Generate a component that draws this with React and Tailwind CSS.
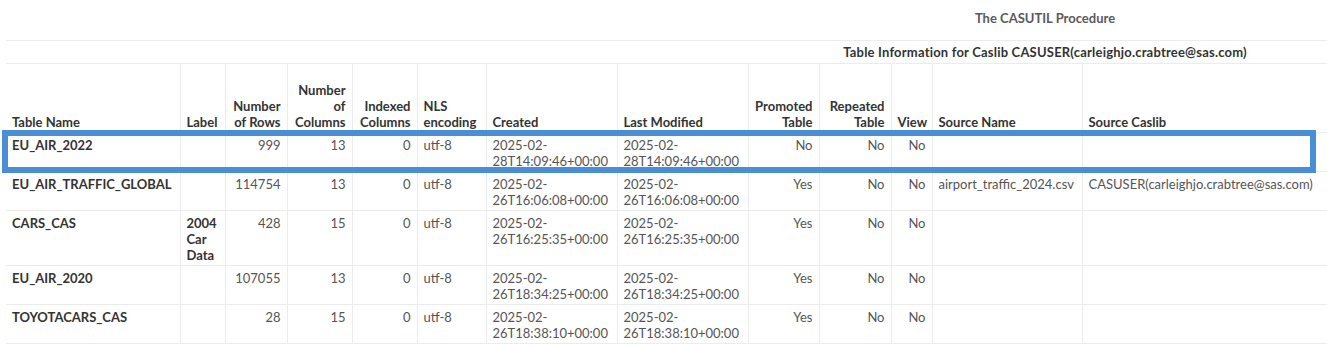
import React from 'react';

const cols = [
  { key: 'name', label: ['Table Name'], w: 174, align: 'left' },
  { key: 'label', label: ['Label'], w: 45, align: 'left' },
  { key: 'rows', label: ['Number', 'of Rows'], w: 62, align: 'right' },
  { key: 'cols', label: ['Number', 'of', 'Columns'], w: 65, align: 'right' },
  { key: 'idx', label: ['Indexed', 'Columns'], w: 65, align: 'right' },
  { key: 'nls', label: ['NLS', 'encoding'], w: 69, align: 'left' },
  { key: 'created', label: ['Created'], w: 131, align: 'left' },
  { key: 'modified', label: ['Last Modified'], w: 131, align: 'left' },
  { key: 'promoted', label: ['Promoted', 'Table'], w: 71, align: 'right' },
  { key: 'repeated', label: ['Repeated', 'Table'], w: 72, align: 'right' },
  { key: 'view', label: ['View'], w: 41, align: 'right' },
  { key: 'srcName', label: ['Source Name'], w: 150, align: 'left' },
  { key: 'srcCaslib', label: ['Source Caslib'], w: 1002, align: 'left' },
];

const tablas = [
  { name: 'EU_AIR_2022', label: '', rows: '999', cols: '13', idx: '0', nls: 'utf-8', created: '2025-02-28T14:09:46+00:00', modified: '2025-02-28T14:09:46+00:00', promoted: 'No', repeated: 'No', view: 'No', srcName: '', srcCaslib: '' },
  { name: 'EU_AIR_TRAFFIC_GLOBAL', label: '', rows: '114754', cols: '13', idx: '0', nls: 'utf-8', created: '2025-02-26T16:06:08+00:00', modified: '2025-02-26T16:06:08+00:00', promoted: 'Yes', repeated: 'No', view: 'No', srcName: 'airport_traffic_2024.csv', srcCaslib: 'CASUSER(carleighjo.crabtree@sas.com)' },
  { name: 'CARS_CAS', label: '2004 Car Data', rows: '428', cols: '15', idx: '0', nls: 'utf-8', created: '2025-02-26T16:25:35+00:00', modified: '2025-02-26T16:25:35+00:00', promoted: 'Yes', repeated: 'No', view: 'No', srcName: '', srcCaslib: '' },
  { name: 'EU_AIR_2020', label: '', rows: '107055', cols: '13', idx: '0', nls: 'utf-8', created: '2025-02-26T18:34:25+00:00', modified: '2025-02-26T18:34:25+00:00', promoted: 'Yes', repeated: 'No', view: 'No', srcName: '', srcCaslib: '' },
  { name: 'TOYOTACARS_CAS', label: '', rows: '28', cols: '15', idx: '0', nls: 'utf-8', created: '2025-02-26T18:38:10+00:00', modified: '2025-02-26T18:38:10+00:00', promoted: 'Yes', repeated: 'No', view: 'No', srcName: '', srcCaslib: '' },
];

// fechas partidas como en la salida de SAS
const renderCelda = (col, t) => {
  const v = t[col.key];
  if (col.key === 'created' || col.key === 'modified') {
    return (
      <>
        {v.slice(0, 8)}
        <br />
        {v.slice(8)}
      </>
    );
  }
  if (col.key === 'label' && v) {
    return v.split(' ').map((p, i) => <div key={i}>{p}</div>);
  }
  return v;
};

const App = () => {
  return (
    <div
      className="relative w-[1327px] h-[346px] overflow-hidden bg-white text-[13px] leading-[16px]"
      style={{ fontFamily: 'Lato, "Noto Sans", sans-serif' }}
    >
      <div className="pl-[6px]">
        <table className="table-fixed border-collapse w-[2078px]">
          <colgroup>
            {cols.map(c => (
              <col key={c.key} style={{ width: c.w }} />
            ))}
          </colgroup>
          <thead>
            <tr className="h-[40px] border-b border-[#ececec]">
              <th colSpan={13} className="text-center align-middle font-bold text-[#5a5a5a] pb-[4px]">
                The CASUTIL Procedure
              </th>
            </tr>
            <tr className="h-[23px] border-b border-[#ececec]">
              <th colSpan={13} className="text-center align-middle font-bold text-[#333] tracking-[0.2px]">
                Table Information for Caslib CASUSER(carleighjo.crabtree@sas.com)
              </th>
            </tr>
            <tr className="h-[69px] border-b border-[#ececec]">
              {cols.map((c, i) => (
                <th
                  key={c.key}
                  className={`align-bottom font-bold text-[#333] px-[6px] pb-[2px] ${c.align === 'right' ? 'text-right' : 'text-left'} ${i > 0 ? 'border-l border-[#ececec]' : ''}`}
                >
                  {c.label.map((l, j) => (
                    <div key={j} className="whitespace-nowrap">{l}</div>
                  ))}
                </th>
              ))}
            </tr>
          </thead>
          <tbody>
            {tablas.map(t => (
              <tr key={t.name} className="border-b border-[#ececec]">
                {cols.map((c, i) => (
                  <td
                    key={c.key}
                    className={`align-top px-[6px] pt-[4px] pb-[2px] whitespace-nowrap ${c.align === 'right' ? 'text-right' : 'text-left'} ${i > 0 ? 'border-l border-[#ececec]' : ''} ${c.key === 'name' || c.key === 'label' ? 'font-bold text-[#333]' : 'text-[#555]'}`}
                  >
                    {renderCelda(c, t)}
                  </td>
                ))}
              </tr>
            ))}
          </tbody>
        </table>
      </div>
      {/* resaltado azul sobre la primera fila */}
      <div className="absolute left-[2px] top-[130px] w-[1314px] h-[43px] border-[6px] border-[#4a8fd6] pointer-events-none" />
    </div>
  );
};

export default App;
